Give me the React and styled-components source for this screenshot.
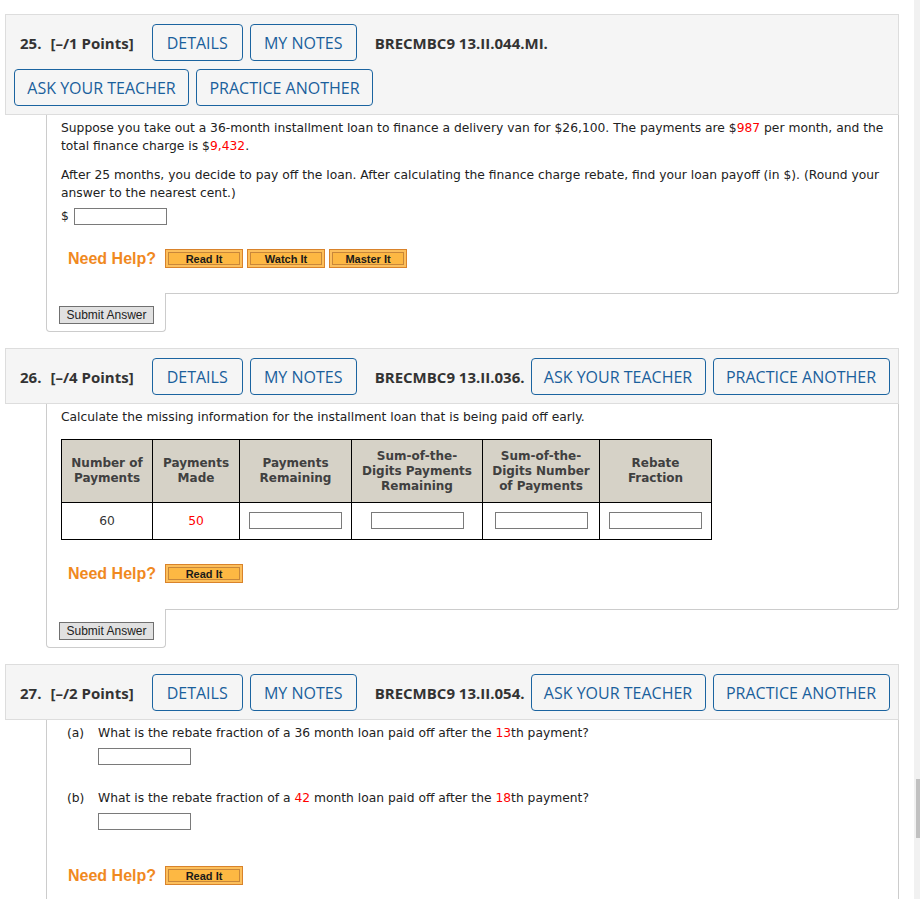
import React from "react";
import styled, { createGlobalStyle } from "styled-components";

const Global = createGlobalStyle`
  html, body { margin: 0; padding: 0; overflow: hidden; background: #fff; }
  body { font-family: "DejaVu Sans", Verdana, sans-serif; }
`;

const Page = styled.div`
  display: flex;
  height: 899px;
  width: 920px;
`;

const Main = styled.div`
  flex: 1;
  padding: 14px 15px 0 5px;
  min-width: 0;
`;

const ScrollTrack = styled.div`
  width: 6px;
  background: #f1f1f1;
  padding-top: 779px;
  box-sizing: border-box;
`;

const ScrollThumb = styled.div`
  margin-left: 2px;
  width: 4px;
  height: 59px;
  background: #c1c1c1;
`;

const Question = styled.section`
  margin-bottom: 16px;
`;

const Header = styled.div`
  display: flex;
  flex-wrap: wrap;
  align-items: center;
  column-gap: 7px;
  row-gap: 8px;
  padding: 9px 5px 8px 8px;
  background: #f5f5f5;
  border: 1px solid #dddddd;
  font-family: "Open Sans", sans-serif;
`;

const ButtonGroup = styled.div`
  display: flex;
  gap: 7px;
`;

const QNum = styled.span`
  font-weight: 700;
  font-size: 15px;
  color: #333;
  margin-left: 6px;
  margin-right: 2px;
`;

const Points = styled.span`
  font-weight: 700;
  font-size: 15px;
  color: #333;
  margin-right: 11px;
`;

const Code = styled.span`
  font-weight: 700;
  font-size: 15px;
  color: #333;
  margin-left: 11px;
  margin-right: -1px;
`;

const HeadButton = styled.button`
  width: ${(p) => p.$w}px;
  height: 37px;
  box-sizing: border-box;
  padding: 0;
  border: 1px solid #1b64a0;
  border-radius: 4px;
  background: transparent;
  color: #1a5f9c;
  font-family: "Open Sans", sans-serif;
  font-size: 16px;
  cursor: pointer;
`;

const Body = styled.div`
  margin-left: 41px;
  border: 1px solid #cccccc;
  border-top: none;
  border-bottom-right-radius: 3px;
  padding: 4px 14px 0;
  height: ${(p) => p.$h}px;
  box-sizing: border-box;
  color: #222;
  font-size: 12.3px;
  line-height: 18px;
`;

const Tab = styled.div`
  margin-left: 41px;
  margin-top: -1px;
  width: 120px;
  box-sizing: border-box;
  background: #fff;
  border: 1px solid #cccccc;
  border-top: none;
  border-radius: 0 0 4px 4px;
  padding: 13px 0 7px 12px;
  position: relative;
`;

const SubmitButton = styled.button`
  display: block;
  width: 95px;
  height: 18px;
  padding: 0;
  box-sizing: border-box;
  background: #e1e1e1;
  border: 1px solid #707070;
  font-family: "Liberation Sans", Arial, sans-serif;
  font-size: 12px;
  color: #222;
`;

const Para = styled.p`
  margin: 0 0 ${(p) => p.$mb ?? 11}px;
`;

const Red = styled.span`
  color: #ff0000;
`;

const AnswerRow = styled.div`
  display: flex;
  align-items: center;
  gap: 5px;
`;

const TextInput = styled.input`
  width: 93px;
  height: 17px;
  box-sizing: border-box;
  border: 1px solid #7a7a7a;
  padding: 0;
  margin: 0;
  background: #fff;
`;

const HelpRow = styled.div`
  display: flex;
  align-items: center;
  gap: 4px;
  margin-top: ${(p) => p.$mt}px;
  padding-left: 7px;
`;

const NeedHelp = styled.span`
  font-family: "Liberation Sans", Arial, sans-serif;
  font-weight: 700;
  font-size: 16px;
  color: #f0891f;
  margin-right: 5px;
`;

const HelpButton = styled.button`
  width: 78px;
  height: 19px;
  box-sizing: border-box;
  padding: 0;
  border: 1px solid #d9832b;
  background: #fdb843;
  box-shadow: inset 0 0 0 2px #fcbf5c, inset 0 0 0 3px #c8873a;
  font-family: "Liberation Sans", Arial, sans-serif;
  font-weight: 700;
  font-size: 11px;
  color: #1a1a1a;
`;

const Table = styled.table`
  border-collapse: collapse;
  margin-top: 13px;
  color: #3c3c3c;
`;

const Th = styled.th`
  width: ${(p) => p.$w}px;
  height: 63px;
  padding: 0 3px;
  box-sizing: border-box;
  background: #d6d2c7;
  border: 1px solid #000;
  font-size: 12px;
  line-height: 15px;
  font-weight: 700;
  color: #404040;
  text-align: center;
`;

const Td = styled.td`
  height: 36px;
  border: 1px solid #000;
  text-align: center;
  font-size: 12.3px;
  color: ${(p) => (p.$red ? "#ff0000" : "#333")};
  padding: 0;
`;

const PartRow = styled.div`
  display: flex;
  gap: 12px;
  padding-left: 6px;
  margin-top: ${(p) => p.$mt ?? 0}px;
`;

const PartLabel = styled.span`
  width: 19px;
`;

const PartContent = styled.div`
  display: flex;
  flex-direction: column;
  gap: 6px;
`;

function QHeader({ num, pts, code }) {
  return (
    <Header>
      <QNum>{num}.</QNum>
      <Points>[–/{pts} Points]</Points>
      <HeadButton $w={91}>DETAILS</HeadButton>
      <HeadButton $w={107}>MY NOTES</HeadButton>
      <Code>{code}</Code>
      <ButtonGroup>
        <HeadButton $w={175}>ASK YOUR TEACHER</HeadButton>
        <HeadButton $w={177}>PRACTICE ANOTHER</HeadButton>
      </ButtonGroup>
    </Header>
  );
}

function Help({ mt, buttons }) {
  return (
    <HelpRow $mt={mt}>
      <NeedHelp>Need Help?</NeedHelp>
      {buttons.map((b) => (
        <HelpButton key={b}>{b}</HelpButton>
      ))}
    </HelpRow>
  );
}

function Submit() {
  return (
    <Tab>
      <SubmitButton>Submit Answer</SubmitButton>
    </Tab>
  );
}

export default function App() {
  const cols = [
    { w: 91, t: ["Number of", "Payments"] },
    { w: 87, t: ["Payments", "Made"] },
    { w: 112, t: ["Payments", "Remaining"] },
    { w: 131, t: ["Sum-of-the-", "Digits Payments", "Remaining"] },
    { w: 117, t: ["Sum-of-the-", "Digits Number", "of Payments"] },
    { w: 112, t: ["Rebate", "Fraction"] },
  ];
  return (
    <>
      <Global />
      <Page>
        <Main>
          <Question>
            <QHeader num="25" pts="1" code="BRECMBC9 13.II.044.MI." />
            <Body $h={179}>
              <Para>
                Suppose you take out a 36-month installment loan to finance a delivery van for $26,100. The
                payments are $<Red>987</Red> per month, and the total finance charge is $<Red>9,432</Red>.
              </Para>
              <Para $mb={5}>
                After 25 months, you decide to pay off the loan. After calculating the finance charge rebate,
                find your loan payoff (in $). (Round your answer to the nearest cent.)
              </Para>
              <AnswerRow>
                <span>$</span>
                <TextInput />
              </AnswerRow>
              <Help mt={24} buttons={["Read It", "Watch It", "Master It"]} />
            </Body>
            <Submit />
          </Question>

          <Question>
            <QHeader num="26" pts="4" code="BRECMBC9 13.II.036." />
            <Body $h={206}>
              <Para $mb={0}>
                Calculate the missing information for the installment loan that is being paid off early.
              </Para>
              <Table>
                <thead>
                  <tr>
                    {cols.map((c, i) => (
                      <Th key={i} $w={c.w}>
                        {c.t.map((l, j) => (
                          <React.Fragment key={j}>
                            {j > 0 && <br />}
                            {l}
                          </React.Fragment>
                        ))}
                      </Th>
                    ))}
                  </tr>
                </thead>
                <tbody>
                  <tr>
                    <Td>60</Td>
                    <Td $red>50</Td>
                    <Td><TextInput /></Td>
                    <Td><TextInput /></Td>
                    <Td><TextInput /></Td>
                    <Td><TextInput /></Td>
                  </tr>
                </tbody>
              </Table>
              <Help mt={24} buttons={["Read It"]} />
            </Body>
            <Submit />
          </Question>

          <Question>
            <QHeader num="27" pts="2" code="BRECMBC9 13.II.054." />
            <Body $h={300}>
              <PartRow>
                <PartLabel>(a)</PartLabel>
                <PartContent>
                  <span>
                    What is the rebate fraction of a 36 month loan paid off after the <Red>13</Red>th payment?
                  </span>
                  <TextInput />
                </PartContent>
              </PartRow>
              <PartRow $mt={24}>
                <PartLabel>(b)</PartLabel>
                <PartContent>
                  <span>
                    What is the rebate fraction of a <Red>42</Red> month loan paid off after the{" "}
                    <Red>18</Red>th payment?
                  </span>
                  <TextInput />
                </PartContent>
              </PartRow>
              <Help mt={36} buttons={["Read It"]} />
            </Body>
          </Question>
        </Main>
        <ScrollTrack>
          <ScrollThumb />
        </ScrollTrack>
      </Page>
    </>
  );
}
